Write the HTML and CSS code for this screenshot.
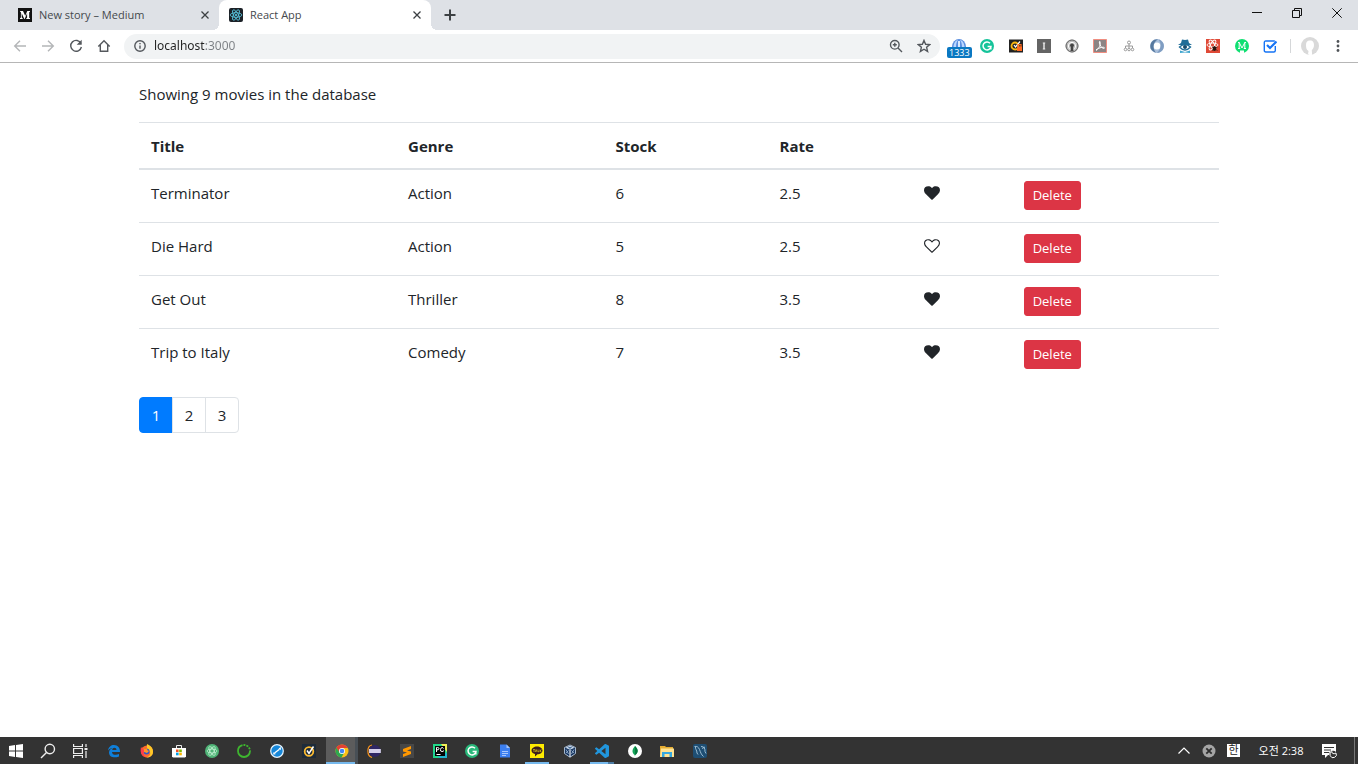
FILE: index.html
```html
<!DOCTYPE html>
<html lang="en">
<head>
  <meta charset="UTF-8">
  <meta name="viewport" content="width=device-width,initial-scale=1">
  <title>React App</title>
  <link rel="stylesheet" href="styles.css">
</head>
<body>

  <!-- BROWSER -->
  <header class="browser">
    <div class="tabstrip">
      <div class="tab">
        <svg class="favicon" viewBox="0 0 14 14"><path fill="#111" d="M0 0h14v14H0z"/><path fill="#fff" d="M2 3h3l2.200 4.800L9.300 3H12v.7l-.8.6v5.400l.8.6v.7H8.300v-.7l.8-.6V5.300L6.700 11h-.4L3.700 5.300v4.200l1 .8v.7H2v-.7l.9-.8V4.300L2 3.600z"/></svg>
        <button class="tab-title">New story – Medium</button>
        <button class="tab-close" aria-label="Close tab"><svg viewBox="0 0 10 10"><path d="M1.500 1.500l7 7m0-7l-7 7"/></svg></button>
      </div>
      <div class="tab active">
        <svg class="favicon" viewBox="0 0 14 14"><rect width="14" height="14" rx="2" fill="#1c2127"/><g fill="none" stroke="#5ccfea" stroke-width=".8"><ellipse cx="7" cy="7" rx="5.800" ry="2.300"/><ellipse cx="7" cy="7" rx="5.800" ry="2.300" transform="rotate(60 7 7)"/><ellipse cx="7" cy="7" rx="5.800" ry="2.300" transform="rotate(120 7 7)"/></g><circle cx="7" cy="7" r="1.100" fill="#5ccfea"/></svg>
        <button class="tab-title">React App</button>
        <button class="tab-close" aria-label="Close tab"><svg viewBox="0 0 10 10"><path d="M1.500 1.500l7 7m0-7l-7 7"/></svg></button>
      </div>
      <button class="new-tab" aria-label="New tab"><svg viewBox="0 0 12 12"><path d="M6 .5v11M.5 6h11"/></svg></button>
      <div class="window-controls">
        <button aria-label="Minimize"><svg viewBox="0 0 10 10"><path d="M0 4.500h10"/></svg></button>
        <button aria-label="Restore"><svg viewBox="0 0 10 10"><path d="M.5 2.500h7v7h-7zM2.500 2.500v-2h7v7h-2"/></svg></button>
        <button aria-label="Close"><svg viewBox="0 0 10 10"><path d="M.3.3l9.400 9.400m0-9.400L.3 9.700"/></svg></button>
      </div>
    </div>

    <div class="toolbar">
      <div class="nav-buttons">
        <button class="dim" aria-label="Back"><svg viewBox="0 0 14 14"><path d="M13 7H2m5-5.300L1.700 7 7 12.300"/></svg></button>
        <button class="dim" aria-label="Forward"><svg viewBox="0 0 14 14"><path d="M1 7h11M7 1.700L12.300 7 7 12.300"/></svg></button>
        <button aria-label="Reload"><svg viewBox="0 0 14 14"><path d="M12 4.500A5.400 5.400 0 1 0 12.400 8"/><path class="solid" d="M12.700.8v5H7.700z"/></svg></button>
        <button aria-label="Home"><svg viewBox="0 0 14 14"><path d="M1.300 7.500L7 1.800l5.700 5.700M3.300 6v6.300h7.400V6"/></svg></button>
      </div>
      <div class="omnibox">
        <svg class="info" viewBox="0 0 12 12"><circle cx="6" cy="6" r="5.200"/><path d="M6 5.400v3.400M6 3v1.300"/></svg>
        <input class="address" type="text" value="localhost:3000" aria-label="Address">
        <button aria-label="Zoom"><svg viewBox="0 0 14 14"><circle cx="5.800" cy="5.800" r="4.300"/><path d="M9 9l4 4M5.800 3.800v4M3.800 5.800h4"/></svg></button>
        <button aria-label="Bookmark"><svg viewBox="0 0 14 14"><path d="M7 1.400l1.600 3.900 4.200.3-3.200 2.700 1 4.100L7 10.200l-3.600 2.200 1-4.100-3.200-2.700 4.200-.3z"/></svg></button>
      </div>
      <div class="extensions">
        <button aria-label="Alerts"><svg viewBox="0 0 14 14"><path fill="#5b8fe0" d="M0 8a7 8 0 0 1 14 0v6H0z"/><path fill="#b9d6ff" d="M1.500 8C2 3 4 1.500 6 1 4.500 3 4 5 4 8zM12.500 8C12 3 10 1.500 8 1c1.500 2 2 4 2 7z"/><path fill="#dcebff" d="M6 8V2h2v6z"/></svg><span class="badge">1333</span></button>
        <button aria-label="Grammarly"><svg viewBox="0 0 14 14"><circle cx="7" cy="7" r="7" fill="#15c39a"/><path fill="none" stroke="#fff" stroke-width="1.500" d="M10 4.200A4 4 0 1 0 11 7.500H7.600M10.800 7.500v3"/></svg></button>
        <button aria-label="Norton"><svg viewBox="0 0 14 14"><path fill="#222" d="M0 .5h14v13H0z"/><circle cx="6" cy="7" r="3.500" fill="none" stroke="#f9b510" stroke-width="1.800"/><path stroke="#fff" stroke-width="1.200" fill="none" d="M5 6l1.500 2L11 2.500"/><path fill="#ff6a21" d="M8 7.500h5v4.500H8z"/><path fill="none" stroke="#ff6a21" stroke-width="1.200" d="M9 8V5.500h3V8"/></svg></button>
        <button aria-label="Instapaper"><svg viewBox="0 0 14 14"><path fill="#646464" d="M0 0h14v14H0z"/><path fill="#eee" d="M5.800 3.500h2.400v1h-.5v5h.5v1H5.800v-1h.5v-5h-.5z"/></svg></button>
        <button aria-label="Access"><svg viewBox="0 0 14 14"><circle cx="7" cy="7" r="6.500" fill="#bbb"/><g fill="none" stroke="#666"><circle cx="7" cy="7" r="6"/><circle cx="7" cy="7" r="3.700" stroke="#fff"/></g><circle cx="7" cy="6.300" r="1.900" fill="#444"/><path fill="#444" d="M6 7h2l.5 5h-3z"/></svg></button>
        <button aria-label="Acrobat"><svg viewBox="0 0 14 14"><path fill="#8c8484" stroke="#ef8d80" d="M.5.5h13v13H.5z"/><path fill="none" stroke="#fff" d="M3 11.500c3-2 5-6 4-9-1-.5-1 2 1 5 1.500 2 3.500 2.500 3.500 1.300C11 7.500 6 8.500 3 11"/></svg></button>
        <button aria-label="Sitemap"><svg viewBox="0 0 14 14"><g fill="none" stroke="#9a9a9a"><circle cx="7" cy="3.500" r="1.500"/><circle cx="3.500" cy="10.500" r="1.300"/><circle cx="7" cy="10.500" r="1.300"/><circle cx="10.500" cy="10.500" r="1.300"/><path d="M7 5v4M3.500 9V7h7v2"/></g></svg></button>
        <button aria-label="Swirl"><svg viewBox="0 0 14 14"><circle cx="7" cy="7" r="5.200" fill="none" stroke="#a9bfdb" stroke-width="3.400"/><path fill="#56799f" d="M8 .2C2 0-.6 5 .6 9.500 2 12 5 13.500 6 13.800 2 9 3 3 8 .2z"/><path fill="#7f9dc2" d="M7 13.800c5 0 8-5 6.500-9C12.500 2 9 .5 8.500.5 12 5 11 10 7 13.800z"/></svg></button>
        <button aria-label="Private eye"><svg viewBox="0 0 14 14"><path fill="#206e98" d="M3 4l1-3.500 3 .5 3-.5L11 4l3 2H0z"/><path fill="#fff" stroke="#206e98" stroke-width="1.400" d="M1.500 8Q7 3 12.500 8 7 14 1.500 8z"/><circle cx="7" cy="8" r="2" fill="#184d6d"/><path fill="#40a6cf" d="M2 11.500l5 1.500 5-1.500V14l-5-.5-5 .5z"/></svg></button>
        <button aria-label="React debugger"><svg viewBox="0 0 14 14"><path fill="#df4936" d="M0 0h14v14H0z"/><g fill="none" stroke="#fff" stroke-width=".9"><ellipse cx="6.500" cy="6" rx="5.500" ry="2"/><ellipse cx="6.500" cy="6" rx="5.500" ry="2" transform="rotate(60 6.500 6)"/><ellipse cx="6.500" cy="6" rx="5.500" ry="2" transform="rotate(120 6.500 6)"/></g><ellipse cx="8.500" cy="9.500" rx="1.800" ry="2.500" fill="#24150f"/><path stroke="#24150f" stroke-width=".7" d="M6 8l5.500 3.500M6 11.500L11.500 8"/></svg></button>
        <button aria-label="Medium enhancer"><svg viewBox="0 0 14 14"><circle cx="7" cy="7" r="7" fill="#10df72"/><path fill="none" stroke="#fff" d="M3 9.500h2.200M8.800 9.500H11M4.200 9.500v-6L7 9l2.800-5.500v6M3 3.500h1.500m5 0H11"/><path fill="#fff" d="M5 14v-2.500h4V14z"/></svg></button>
        <button aria-label="Tasks"><svg viewBox="0 0 14 14"><path fill="none" stroke="#1674f5" stroke-width="1.400" d="M12.300 7v4.500q0 1.500-1.500 1.500h-8q-1.500 0-1.500-1.500v-8Q1.300 2 2.800 2h9"/><path fill="none" stroke="#1674f5" stroke-width="2.200" d="M4 6l3 3 6.500-6.500"/></svg></button>
      </div>
      <div class="profile">
        <button aria-label="Profile"><svg class="avatar" viewBox="0 0 18 18"><circle cx="9" cy="9" r="9" fill="#d9d9d9"/><path fill="#fff" d="M9 3.500c3 0 4 2 4 4.500s-1 4-2.200 5l.3 4.700c-3 .8-4 0-4-1.200l.4-2.500C5.500 13 5 11 5 8s1-4.500 4-4.500z"/></svg></button>
        <button aria-label="Menu"><svg viewBox="0 0 14 14"><g fill="#4f5357"><circle cx="7" cy="2.500" r="1.400"/><circle cx="7" cy="7" r="1.400"/><circle cx="7" cy="11.500" r="1.400"/></g></svg></button>
      </div>
    </div>
  </header>

  <!-- MOVIES -->
  <main class="container">
    <p class="summary">Showing 9 movies in the database</p>
    <table class="table">
      <colgroup>
        <col class="col-title"><col class="col-genre"><col class="col-stock"><col class="col-rate"><col class="col-like"><col class="col-delete">
      </colgroup>
      <thead>
        <tr><th>Title</th><th>Genre</th><th>Stock</th><th>Rate</th><th></th><th></th></tr>
      </thead>
      <tbody>
        <tr>
          <td>Terminator</td><td>Action</td><td>6</td><td>2.5</td>
          <td><button class="like" aria-label="Unlike"><svg viewBox="0 0 1792 1792"><use href="#heart"/></svg></button></td>
          <td><button class="btn-danger">Delete</button></td>
        </tr>
        <tr>
          <td>Die Hard</td><td>Action</td><td>5</td><td>2.5</td>
          <td><button class="like" aria-label="Like"><svg viewBox="0 0 1792 1792"><use href="#heart-o"/></svg></button></td>
          <td><button class="btn-danger">Delete</button></td>
        </tr>
        <tr>
          <td>Get Out</td><td>Thriller</td><td>8</td><td>3.5</td>
          <td><button class="like" aria-label="Unlike"><svg viewBox="0 0 1792 1792"><use href="#heart"/></svg></button></td>
          <td><button class="btn-danger">Delete</button></td>
        </tr>
        <tr>
          <td>Trip to Italy</td><td>Comedy</td><td>7</td><td>3.5</td>
          <td><button class="like" aria-label="Unlike"><svg viewBox="0 0 1792 1792"><use href="#heart"/></svg></button></td>
          <td><button class="btn-danger">Delete</button></td>
        </tr>
      </tbody>
    </table>
    <nav aria-label="Pages">
      <ul class="pagination">
        <li><a class="page-link current" href="#1">1</a></li>
        <li><a class="page-link" href="#2">2</a></li>
        <li><a class="page-link" href="#3">3</a></li>
      </ul>
    </nav>
  </main>

  <!-- TASKBAR -->
  <footer class="taskbar">
    <div class="system">
      <button aria-label="Start"><svg viewBox="0 0 16 16"><path fill="#fff" d="M1 3l6-.9v5.500H1zM8 2l7-1v6.600H8zM1 8.500h6V14l-6-.9zM8 8.500h7V15l-7-1z"/></svg></button>
      <button aria-label="Search"><svg viewBox="0 0 16 16"><g fill="none" stroke="#eee" stroke-width="1.400"><circle cx="9.800" cy="6" r="4.700"/><path d="M6.500 9.500L1 15"/></g></svg></button>
      <button aria-label="Task view"><svg viewBox="0 0 16 16"><g fill="none" stroke="#eee" stroke-width="1.200"><path d="M1.600 5.500h8.800v5H1.600zM1.600 1v2.500h8.800V1M1.600 15v-2.500h8.800V15M14 1v3M14 8v7"/></g><path fill="#eee" d="M12.500 5h3v2h-3z"/></svg></button>
    </div>
    <div class="apps">
      <button aria-label="Edge"><svg viewBox="0 0 14 14"><path fill="#0f7fd9" d="M1 6.500C1.500 3 4 1 7 1c4 0 6 3 6 7H5c0 3 4 3.500 7 2v2.500c-5 2-10 .5-10-4C2 6 4 4.800 5.500 4 4 4 2 5 1 6.500zM5.200 6h4.300c0-3-4-3-4.300 0z"/></svg></button>
      <button aria-label="Firefox"><svg viewBox="0 0 14 14"><circle cx="7" cy="7.500" r="6" fill="#ff6b2c"/><path fill="#ffc928" d="M7 0c4 2 6 4 6 8s-4 6-7 5.500c5-1 5-5 3-7C7 5 6.500 3 7 0z"/><circle cx="6.500" cy="7.500" r="3" fill="#3455c8"/><path fill="#ff3e4b" d="M1 3C0 8 1 12 6 13.500 3 11 3 8 5 7L2.500 5z"/><path fill="#ff9a25" d="M4 5l4-1-1 2 2 1-2 2-3-1z"/></svg></button>
      <button aria-label="Store"><svg viewBox="0 0 14 14"><path fill="none" stroke="#eee" d="M4.500 4V1.500h5V4"/><path fill="#fff" d="M0 4h14v8.500l-1 1H1l-1-1z"/><path fill="#f05022" d="M4 5.500h2.600v2.600H4z"/><path fill="#7db900" d="M7.200 5.500h2.600v2.600H7.200z"/><path fill="#00a2ea" d="M4 8.700h2.600v2.600H4z"/><path fill="#ffb800" d="M7.200 8.700h2.600v2.600H7.200z"/></svg></button>
      <button aria-label="Atom"><svg viewBox="0 0 14 14"><circle cx="7" cy="7" r="7" fill="#4fb477"/><g fill="none" stroke="#c9f2d7" stroke-width=".7"><ellipse cx="7" cy="7" rx="5" ry="2"/><ellipse cx="7" cy="7" rx="5" ry="2" transform="rotate(60 7 7)"/><ellipse cx="7" cy="7" rx="5" ry="2" transform="rotate(120 7 7)"/></g></svg></button>
      <button aria-label="Anaconda"><svg viewBox="0 0 14 14"><circle cx="7" cy="7" r="6" fill="none" stroke="#3eb62f" stroke-width="1.800" stroke-dasharray="26 1 2 1 2 1 2 1"/></svg></button>
      <button aria-label="Remote tool"><svg viewBox="0 0 14 14"><circle cx="7" cy="7" r="6.300" fill="#1687d9" stroke="#e8f5ff" stroke-width="1.200"/><path stroke="#fff" stroke-width="1.300" d="M4.500 9L9.500 5.200"/><path fill="#fff" d="M3 8.300L6 10l-2.500.8zM8.500 4.500L10.800 3 11 6z"/></svg></button>
      <button aria-label="Norton"><svg viewBox="0 0 14 14"><path fill="#1d2b3a" d="M0 0h14v14H0z"/><circle cx="7" cy="7.500" r="4.300" fill="none" stroke="#fdbb30" stroke-width="1.800"/><path fill="none" stroke="#fff" stroke-width="1.500" d="M5 6.500l2 3 4.500-7"/></svg></button>
      <button class="open focused" aria-label="Chrome"><svg viewBox="0 0 14 14"><circle cx="7" cy="7" r="6.500" fill="#fbc116"/><path fill="#e34133" d="M1.400 3.700A6.500 6.500 0 0 1 12.800 4H7L4 8.500z"/><path fill="#2da94f" d="M1.400 3.700A6.500 6.500 0 0 0 6.500 13.500L9 9H5z"/><circle cx="7" cy="7" r="3" fill="#fff"/><circle cx="7" cy="7" r="2.300" fill="#4285f4"/></svg></button>
      <button aria-label="Eclipse"><svg viewBox="0 0 14 14"><path fill="none" stroke="#f7941e" stroke-width="1.200" d="M5 1C-.5 2-.5 12 5 13.500"/><circle cx="7.800" cy="7" r="6" fill="#2f2764"/><path fill="#b9b2dc" d="M2 5h11.600v4H2z"/><path stroke="#f1effa" d="M2 6h12M2 8h12"/></svg></button>
      <button aria-label="Sublime Text"><svg viewBox="0 0 14 14"><path fill="#474747" d="M0 0h14v14H0z"/><path fill="#ff9800" d="M3 5l8-3v3L7 6.500l4 1V10l-8 3v-3l4-1.500-4-1z"/></svg></button>
      <button aria-label="PyCharm"><svg viewBox="0 0 14 14"><path fill="#21d789" d="M0 0h14v14H0z"/><path fill="#f3ee55" d="M8 0h6v8z"/><path fill="#20b6d0" d="M0 9l7 5h7V9z"/><path fill="#050505" d="M2 2h10v10H2z"/><path fill="none" stroke="#fff" d="M3.500 8V3.500h1q1.500 0 1.500 1.200t-2 1.200M10.500 4.500Q10 3.500 9 3.500T7.500 5.500 9 7.500t1.500-1M3.500 10.500h4"/></svg></button>
      <button aria-label="Grammarly"><svg viewBox="0 0 14 14"><circle cx="7" cy="7" r="7" fill="#28b779"/><path fill="none" stroke="#fff" stroke-width="1.500" d="M10 4.200A4 4 0 1 0 11 7.500H7.600M10.800 7.500v3"/></svg></button>
      <button aria-label="Docs"><svg viewBox="0 0 14 14"><path fill="#3c7ff1" d="M2 .5h6.500L12 4v9.500H2z"/><path fill="#a6c6fa" d="M8.500.5L12 4H8.500z"/><path stroke="#c5daff" stroke-width=".8" d="M4 7.500h6M4 9.500h6M4 11.500h4"/></svg></button>
      <button class="open" aria-label="KakaoTalk"><svg viewBox="0 0 14 14"><path fill="#ffeb00" d="M0 0h14v14H0z"/><path fill="#3c1e1e" d="M7 2.500c3 0 5.500 1.700 5.500 4S10 10.300 7.500 10.300L5 12.500V10C3 9.500 1.500 8.300 1.500 6.500c0-2.300 2.500-4 5.500-4z"/><path stroke="#d8c71a" stroke-width=".7" fill="none" d="M3 5.500h2M4 5.500V8M5.300 8l.8-2.500L7 8M8 5.500v2.200h1M10 5.500V8m1.500-2.500L10 7l1.500 1"/></svg></button>
      <button aria-label="VirtualBox"><svg viewBox="0 0 14 14"><path fill="#183660" stroke="#c5d8ec" stroke-width=".8" d="M1.500 3.500L7 1l5.500 2.500v6L7 13.300 1.500 9.500z"/><path fill="#dbe8f5" d="M2.500 3.700L7 1.800l4.500 1.900L7 5.800z"/><path fill="#3c6391" d="M4.500 3.700L7 2.700l2.500 1L7 4.800z"/><path stroke="#fff" stroke-width="1.100" d="M7 6v7"/><path fill="none" stroke="#9fb9d6" stroke-width=".8" d="M3 5.500L5.500 10M3 9l2.500-2.500M11 5.500L8.500 10M11 9L8.500 6.500"/></svg></button>
      <button class="open stacked" aria-label="VS Code"><svg viewBox="0 0 24 24"><path fill="#2196dd" d="M23.150 2.587L18.210.21a1.494 1.494 0 0 0-1.705.29l-9.460 8.630-4.120-3.128a.999.999 0 0 0-1.276.057L.327 7.261A1 1 0 0 0 .326 8.740L3.899 12 .326 15.260a1 1 0 0 0 .001 1.479L1.650 17.940a.999.999 0 0 0 1.276.057l4.120-3.128 9.460 8.630a1.492 1.492 0 0 0 1.704.29l4.942-2.377A1.500 1.500 0 0 0 24 20.060V3.939a1.500 1.500 0 0 0-.85-1.352zm-5.146 14.861L10.826 12l7.178-5.448v10.896z"/></svg></button>
      <button aria-label="MongoDB Compass"><svg viewBox="0 0 14 14"><circle cx="7" cy="7" r="7" fill="#fff"/><path fill="#13a458" d="M7 2c4 4 3 7 .2 9L7 13l-.3-2C4 9 3.500 6 7 2z"/><path fill="#07783d" d="M7 2c4 4 3 7 .2 9z"/></svg></button>
      <button aria-label="File Explorer"><svg viewBox="0 0 14 14"><path fill="#e5ad32" d="M0 2h5l1 1h7v10H0z"/><path fill="#ffe393" d="M1 4.500h13V13H0z"/><path fill="#36a8df" d="M2 8h10v5H9.500v-3h-5v3H2z"/></svg></button>
      <button aria-label="MySQL Workbench"><svg viewBox="0 0 14 14"><rect width="14" height="14" rx="2" fill="#1e4e73"/><path fill="none" stroke="#a8c6da" stroke-width=".9" d="M1.500 2.500c2.500-.5 4 .5 5 3s1.500 5 4 7M2.500 3C2 5 4 6 4 9l1 1.500M8 2.500c3 0 4 1.500 4 5l1 2M9 4.500L12 3"/></svg></button>
    </div>
    <div class="tray">
      <button aria-label="Show hidden icons"><svg viewBox="0 0 14 14"><path fill="none" stroke="#fff" stroke-width="1.200" d="M1.500 9.500L7 4l5.500 5.500"/></svg></button>
      <button aria-label="Disconnected"><svg viewBox="0 0 14 14"><circle cx="7" cy="7" r="6.500" fill="#a5a5a5"/><path stroke="#2d2d2d" stroke-width="1.800" d="M4.300 4.300l5.400 5.400m0-5.400L4.300 9.700"/></svg></button>
      <button class="ime"><span>한</span></button>
      <button class="clock">오전 2:38</button>
      <button aria-label="Notifications"><svg viewBox="0 0 16 16"><path fill="#fff" d="M1 1h14v11H7l-3 3v-3H1z"/><path stroke="#333" d="M3 4.500h10M3 7h7M3 9.500h5"/><circle cx="12" cy="11.500" r="3.700" fill="#333"/><path fill="none" stroke="#fff" d="M15 10a3.200 3.200 0 1 1-4-1.500c-.3 2 1.500 3 4 1.500z"/></svg></button>
      <span class="show-desktop"></span>
    </div>
  </footer>

  <svg class="symbols" aria-hidden="true">
    <symbol id="heart" viewBox="0 0 1792 1792"><path d="M896 1664q-26 0-44-18l-624-602q-10-8-27.500-26T145 952.500 77 855 23.500 734 0 596q0-220 127-344t351-124q62 0 126.500 21.500t120 58T820 276t76 68q36-36 76-68t95.500-68.500 120-58T1314 128q224 0 351 124t127 344q0 221-229 450l-623 600q-18 18-44 18z"/></symbol>
    <symbol id="heart-o" viewBox="0 0 1792 1792"><path d="M1664 596q0-81-21.500-143t-55-98.500-81.500-59.500-94-31-98-8-112 25.500-110.500 64-86.500 72-60 61.500q-18 22-49 22t-49-22q-24-28-60-61.500t-86.500-72-110.500-64-112-25.500-98 8-94 31-81.500 59.500-55 98.500-21.500 143q0 168 187 355l581 560 580-559q188-188 188-356zm128 0q0 221-229 450l-623 600q-18 18-44 18t-44-18l-624-602q-10-8-27.500-26T145 952.500 77 855 23.500 734 0 596q0-220 127-344t351-124q62 0 126.500 21.500t120 58T820 276t76 68q36-36 76-68t95.500-68.500 120-58T1314 128q224 0 351 124t127 344z"/></symbol>
  </svg>
</body>
</html>
```
FILE: styles.css
```css
:root {
  --strip: #dee1e6;
  --pill: #f1f3f4;
  --icon: #54585d;
  --text: #212529;
  --line: #dee2e6;
  --danger: #dc3545;
  --primary: #007bff;
  --taskbar: #333;
  --running: #76b9ed;
}
* { margin:0; padding:0; box-sizing:border-box; }
body {
  display:flex; flex-direction:column;
  min-height:100vh; background:#fff; color:var(--text);
  font-family:"Open Sans","Noto Sans CJK KR",sans-serif;
  font-size:15px; line-height:24px;
}
button { background:none; border:none; color:inherit; font:inherit; cursor:pointer; }
svg { display:block; width:14px; height:14px; flex:none; }
.symbols { display:none; }

/* TABS */
.browser { border-bottom:1px solid #b6b6b6; }
.browser button { display:flex; align-items:center; justify-content:center; }
.tabstrip {
  display:flex; height:30px; background:var(--strip);
  font-size:11px; line-height:16px; color:#45494d;
}
.tab {
  display:flex; align-items:center; width:219px;
  padding:0 9px 0 18px;
}
.tab.active {
  position:relative; width:212px; padding:0 9px 0 10px;
  background:#fff; border-radius:8px 8px 0 0;
}
/* feet of the active tab */
.tab.active::before, .tab.active::after {
  content:""; position:absolute; bottom:0; width:6px; height:6px;
}
.tab.active::before { left:-6px; background:radial-gradient(circle at 0 0, transparent 6px, #fff 6px); }
.tab.active::after { right:-6px; background:radial-gradient(circle at 100% 0, transparent 6px, #fff 6px); }
.tab .tab-title { flex:1; justify-content:flex-start; margin-left:7px; }
.tab-close svg { width:10px; height:10px; }
.tabstrip button svg { fill:none; stroke:#3c4043; stroke-width:1.3; }
.new-tab { width:38px; }
.new-tab svg { width:12px; height:12px; }
.tabstrip .new-tab svg { stroke-width:2; }
.window-controls { display:flex; margin-left:auto; padding-right:1px; }
.window-controls button { width:40px; height:26px; }
.window-controls svg { width:10px; height:10px; }
.tabstrip .window-controls svg { stroke:#111; stroke-width:1; }

/* TOOLBAR */
.toolbar { display:flex; align-items:center; height:32px; background:#fff; }
.nav-buttons { display:flex; padding:0 6px; }
.nav-buttons button { width:28px; height:28px; }
.nav-buttons svg, .omnibox svg { fill:none; stroke:var(--icon); stroke-width:1.4; }
.nav-buttons .dim svg { stroke:#b4b6b8; }
.nav-buttons .solid { fill:var(--icon); stroke:none; }
.omnibox {
  display:flex; flex:1; align-items:center; height:25px;
  padding:0 2px 0 10px; margin-right:5px;
  background:var(--pill); border-radius:13px;
}
.omnibox .info { width:12px; height:12px; margin-right:8px; }
.omnibox button { width:28px; height:24px; }
.address {
  flex:1; min-width:0; border:none; outline:none;
  font-family:"Noto Sans",sans-serif; font-size:12px; line-height:16px;
  color:transparent;
  /* host in black, port in grey */
  background:linear-gradient(to right, #222 51px, #7c8084 51px);
  -webkit-background-clip:text; background-clip:text;
}
.extensions { display:grid; grid-template-columns:repeat(12, 1fr); width:339px; }
.extensions button { position:relative; height:28px; }
.badge {
  position:absolute; left:2px; bottom:2px;
  padding:0 2px; border-radius:2px; background:#0a78c2;
  color:#fff; font-size:9px; line-height:11px;
}
.profile { display:flex; align-items:center; margin-left:6px; padding-right:6px; border-left:1px solid #d5d7d9; height:14px; }
.profile button { width:28px; height:28px; }
.profile button:first-child { margin-left:5px; }
.profile .avatar { width:18px; height:18px; }

/* MOVIES */
.container { flex:1; width:100%; max-width:1104px; margin:0 auto; padding:19px 12px; }
.summary { margin-bottom:16px; }
.table { width:100%; margin-bottom:16px; border-collapse:collapse; table-layout:fixed; }
.table th, .table td { padding:11px 12px; text-align:left; vertical-align:top; border-top:1px solid var(--line); }
.table th { padding-bottom:10px; border-bottom:2px solid var(--line); }
.table td { height:53px; }
.col-title { width:23.8%; }
.col-genre { width:19.2%; }
.col-stock { width:15.2%; }
.col-rate { width:13.4%; }
.col-like { width:9.2%; }
.col-delete { width:19.2%; }
.like { display:flex; align-items:center; height:24px; }
.like svg { width:16px; height:16px; fill:var(--text); }
.btn-danger {
  display:block; height:29px; padding:0 8px;
  border:1px solid var(--danger); border-radius:3px;
  background:var(--danger); color:#fff; font-size:13px; line-height:27px;
}
.pagination { display:flex; list-style:none; }
.page-link {
  display:block; width:34px; height:36px; margin-right:-1px;
  border:1px solid var(--line);
  color:var(--text); line-height:34px; text-align:center; text-decoration:none;
}
.pagination li:first-child .page-link { border-radius:4px 0 0 4px; }
.pagination li:last-child .page-link { border-radius:0 4px 4px 0; }
.page-link.current { background:var(--primary); border-color:var(--primary); color:#fff; }

/* TASKBAR */
.taskbar { display:flex; height:27px; background:var(--taskbar); color:#fff; }
.taskbar button { display:flex; align-items:center; justify-content:center; }
.system { display:grid; grid-template-columns:repeat(3, 1fr); width:96px; margin-right:2px; }
.system svg { width:16px; height:16px; }
.apps { display:grid; grid-template-columns:repeat(19, 1fr); width:618px; }
.apps .open {
  background:linear-gradient(var(--running), var(--running)) center bottom / 24px 2px no-repeat;
}
.apps .stacked {
  background:
    linear-gradient(to right, var(--running) 18px, #4c7ba3 18px) center bottom / 24px 2px no-repeat;
}
.apps .focused {
  background-color:#5c5c5c; background-size:100% 2px;
  box-shadow:inset -3px 0 #484f55;
}
.tray { display:flex; margin-left:auto; font-size:11px; }
.tray button { width:25px; }
.ime span {
  width:13px; height:13px; background:#fff; color:#222;
  font-size:11px; line-height:12px; text-align:center;
}
.tray .clock { width:70px; }
.tray .clock + button { width:26px; }
.tray .clock + button svg { width:16px; height:16px; }
.show-desktop { width:4px; margin-left:12px; border-left:1px solid #777; }
```
